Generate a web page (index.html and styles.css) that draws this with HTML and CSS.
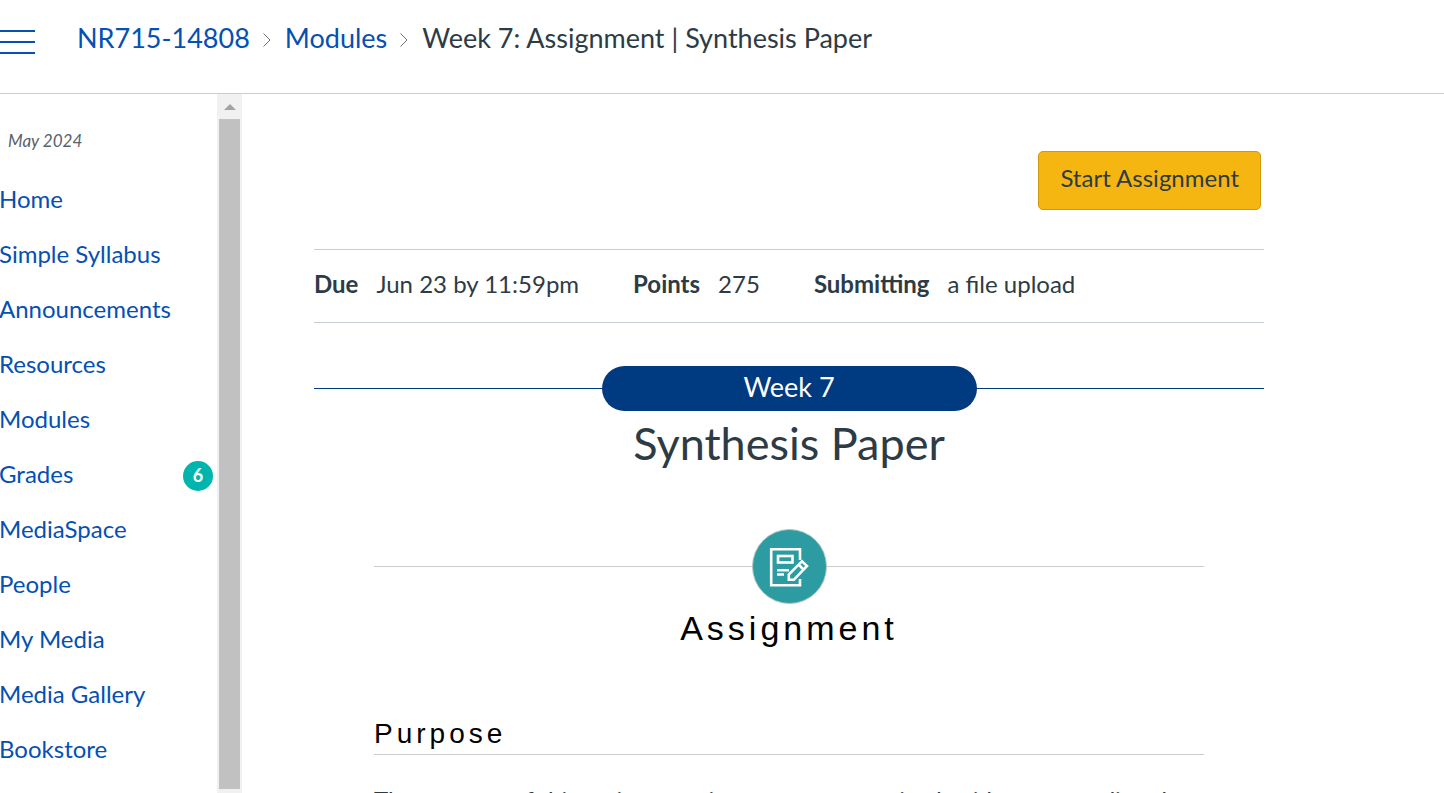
FILE: index.html
```html
<!DOCTYPE html>
<html lang="en">
<head>
    <meta charset="UTF-8">
    <meta name="viewport" content="width=device-width, initial-scale=1.0">
    <title>Week 7: Assignment | Synthesis Paper</title>
    <link rel="stylesheet" href="styles.css">
</head>
<body>
    <header class="topbar">
        <button class="menu-toggle" type="button" aria-label="Course navigation menu">
            <span></span>
            <span></span>
            <span></span>
        </button>
        <nav class="breadcrumbs" aria-label="Breadcrumbs">
            <a href="#">NR715-14808</a>
            <svg class="chevron" viewBox="0 0 8 14" aria-hidden="true"><path d="M0.5 0.5 L7 7 L0.5 13.5"/></svg>
            <a href="#">Modules</a>
            <svg class="chevron" viewBox="0 0 8 14" aria-hidden="true"><path d="M0.5 0.5 L7 7 L0.5 13.5"/></svg>
            <span>Week 7: Assignment | Synthesis Paper</span>
        </nav>
    </header>

    <div class="layout">
        <aside class="sidebar">
            <div class="course-menu">
                <p class="term">May 2024</p>
                <nav aria-label="Course">
                    <ul class="menu-list">
                        <li><a href="#">Home</a></li>
                        <li><a href="#">Simple Syllabus</a></li>
                        <li><a href="#">Announcements</a></li>
                        <li><a href="#">Resources</a></li>
                        <li><a href="#">Modules</a></li>
                        <li><a href="#">Grades <span class="badge">6</span></a></li>
                        <li><a href="#">MediaSpace</a></li>
                        <li><a href="#">People</a></li>
                        <li><a href="#">My Media</a></li>
                        <li><a href="#">Media Gallery</a></li>
                        <li><a href="#">Bookstore</a></li>
                    </ul>
                </nav>
            </div>
            <div class="scrollbar" aria-hidden="true">
                <svg class="scroll-up" viewBox="0 0 12 6"><path d="M0 6 L6 0 L12 6 Z"/></svg>
                <div class="scroll-thumb"></div>
            </div>
        </aside>

        <main class="content">
            <div class="actions">
                <button class="btn-start" type="button">Start Assignment</button>
            </div>

            <dl class="details">
                <div><dt>Due</dt><dd>Jun 23 by 11:59pm</dd></div>
                <div><dt>Points</dt><dd>275</dd></div>
                <div><dt>Submitting</dt><dd>a file upload</dd></div>
            </dl>

            <div class="week"><span>Week 7</span></div>
            <h1 class="title">Synthesis Paper</h1>

            <section class="assignment">
                <div class="icon-row">
                    <svg class="icon" viewBox="0 0 75 75" aria-hidden="true">
                        <circle class="icon-bg" cx="37.5" cy="37.5" r="37"/>
                        <g class="icon-lines">
                            <path d="M48 31 V20.2 H19.2 V56.2 H48 V50"/>
                            <rect x="26" y="27" width="14.5" height="6.5"/>
                            <path d="M25 41.2 H37 M25 45.5 H32"/>
                            <path d="M36.8 50.8 V45.5 L50 32.2 L55 37 L41.8 50.8 Z"/>
                            <path d="M46.5 35.5 L51.5 40.5"/>
                        </g>
                    </svg>
                </div>
                <h2>Assignment</h2>
                <h3>Purpose</h3>
                <p>The purpose of this assignment is to convey organized evidence regarding the practice problem.</p>
            </section>
        </main>
    </div>
</body>
</html>
```
FILE: styles.css
```css
* {
    box-sizing: border-box;
}

body {
    margin: 0;
    height: 100vh;
    display: flex;
    flex-direction: column;
    overflow: hidden;
    font-family: Lato, "Liberation Sans", sans-serif;
    font-size: 24px;
    line-height: 36px;
    color: #2d3b45;
    background: #fff;
}

a {
    color: #0550b3;
    text-decoration: none;
}

/* top bar */
.topbar {
    display: flex;
    flex: none;
    gap: 42px;
    height: 94px;
    padding-top: 18px;
    border-bottom: 1px solid #c7cdd1;
}

.menu-toggle {
    display: flex;
    flex-direction: column;
    gap: 9px;
    width: 35px;
    height: 36px;
    padding: 12px 0 0;
    border: 0;
    background: none;
}

.menu-toggle span {
    width: 100%;
    height: 2px;
    flex: none;
    background: #0550b3;
}

.breadcrumbs {
    display: flex;
    align-items: center;
    height: 39px;
    font-size: 27px;
}

.chevron {
    width: 8px;
    height: 14px;
    margin: 5px 14px 0 13px;
    fill: none;
    stroke: #66737d;
}

/* left menu */
.layout {
    display: flex;
    flex: 1;
    min-height: 0;
}

.sidebar {
    display: flex;
    flex: none;
    width: 242px;
}

.course-menu {
    flex: 1;
    overflow: hidden;
    padding-top: 29px;
}

.term {
    margin: 0 0 22px 8px;
    color: #55626b;
    font-size: 17px;
    line-height: 36px;
    font-style: italic;
}

.menu-list {
    margin: 0 0 0 -1px;
    padding: 0;
    list-style: none;
}

.menu-list a {
    display: flex;
    justify-content: space-between;
    align-items: center;
    height: 36px;
    margin-bottom: 19px;
    padding-right: 4px;
}

.badge {
    width: 30px;
    height: 30px;
    margin-top: 4px;
    border-radius: 50%;
    background: #00b5ad;
    color: #fff;
    font-size: 18px;
    font-weight: bold;
    line-height: 29px;
    text-align: center;
}

.scrollbar {
    display: flex;
    flex-direction: column;
    align-items: center;
    width: 25px;
    padding: 10px 2px 4px;
    background: #f1f1f1;
}

.scroll-up {
    flex: none;
    width: 12px;
    height: 6px;
    margin-bottom: 9px;
    fill: #a3a3a3;
}

.scroll-thumb {
    flex: 1;
    width: 21px;
    background: #c1c1c1;
}

/* assignment page */
.content {
    flex: 1;
    padding: 57px 180px 0 72px;
    overflow: hidden;
}

.actions {
    display: flex;
    justify-content: flex-end;
    padding-right: 3px;
}

.btn-start {
    height: 59px;
    padding: 0 21px 5px;
    border: 1px solid #cf9a0d;
    border-radius: 5px;
    background: #f6b612;
    color: #2d3b45;
    font: inherit;
}

.details {
    display: flex;
    gap: 54px;
    margin: 39px 0 43px;
    padding: 16px 0 20px;
    border: solid #c7cdd1;
    border-width: 1px 0;
}

.details div {
    display: flex;
    gap: 18px;
}

.details dt {
    font-weight: bold;
}

.details dd {
    margin: 0;
}

.week {
    display: flex;
    align-items: center;
    color: #fff;
    font-size: 27px;
}

.week::before,
.week::after {
    content: "";
    flex: 1;
    height: 1px;
    background: #003a80;
}

.week span {
    width: 375px;
    height: 45px;
    border-radius: 23px;
    background: #003a80;
    line-height: 42px;
    text-align: center;
}

.title {
    margin: 0;
    font-size: 45px;
    font-weight: normal;
    line-height: 64px;
    text-align: center;
}

.assignment {
    padding: 54px 60px 0;
}

.icon-row {
    display: flex;
    align-items: center;
}

.icon-row::before,
.icon-row::after {
    content: "";
    flex: 1;
    height: 1px;
    background: #ccc;
}

.icon {
    width: 75px;
    height: 75px;
}

.icon-bg {
    fill: #2d9ca2;
    stroke: #b5c5c7;
}

.icon-lines {
    fill: none;
    stroke: #fff;
    stroke-width: 2.6;
}

.assignment h2,
.assignment h3 {
    margin: 0;
    font-family: "Liberation Sans", Arial, sans-serif;
    font-weight: normal;
    letter-spacing: 4px;
    color: #000;
}

.assignment h2 {
    font-size: 34px;
    line-height: 48px;
    text-align: center;
}

.assignment h3 {
    margin-top: 62px;
    border-bottom: 1px solid #ccc;
    font-size: 28px;
    line-height: 40px;
}

.assignment p {
    margin: 27px 0 0;
}
```
